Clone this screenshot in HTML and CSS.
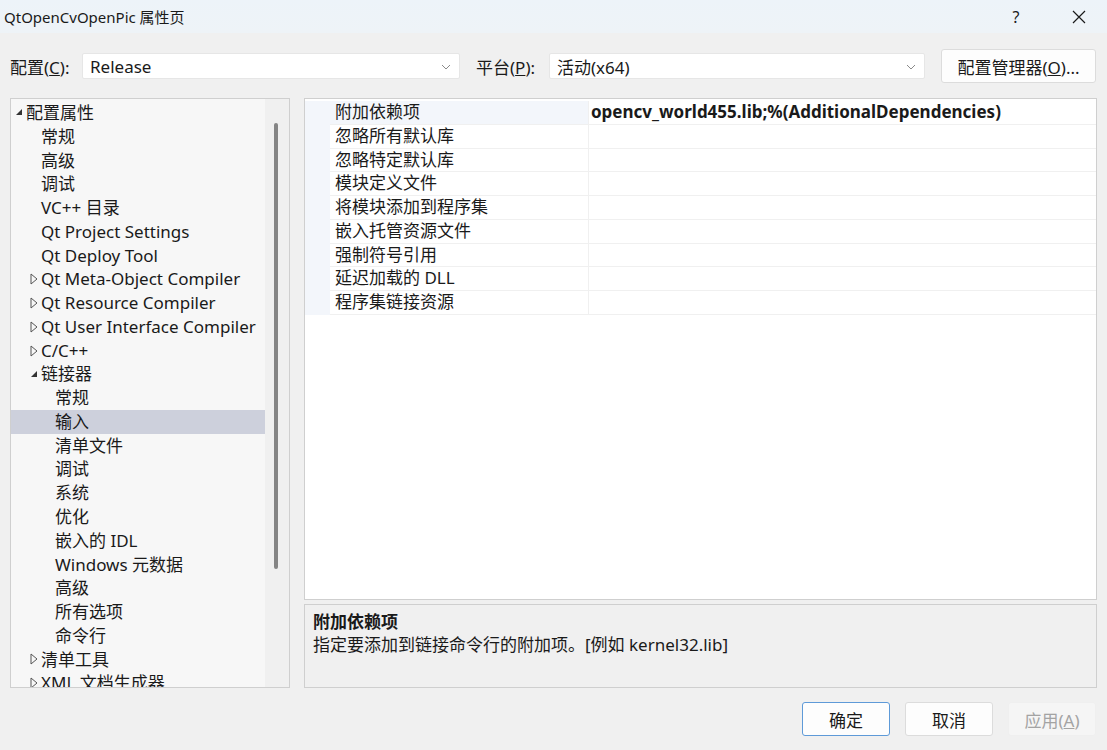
FILE: index.html
```html
<!DOCTYPE html>
<html lang="zh-CN">
<head>
<meta charset="utf-8">
<title>QtOpenCvOpenPic 属性页</title>
<link rel="stylesheet" href="styles.css">
</head>
<body>
<div class="window">
  <div class="titlebar">
    <span class="title">QtOpenCvOpenPic 属性页</span>
    <span class="tb-help">?</span>
    <span class="tb-close">
      <svg width="14" height="14" viewBox="0 0 14 14"><path d="M1 1L13 13M13 1L1 13" stroke="#1a1a1a" stroke-width="1.2" fill="none"/></svg>
    </span>
  </div>

  <div class="config-row">
    <span class="lbl lbl-config">配置(<u>C</u>):</span>
    <div class="combo combo-config"><span>Release</span>
      <svg class="chev" width="10" height="6" viewBox="0 0 10 6"><path d="M1 1L5 5L9 1" stroke="#8a8a8a" stroke-width="1" fill="none"/></svg>
    </div>
    <span class="lbl lbl-plat">平台(<u>P</u>):</span>
    <div class="combo combo-plat"><span>活动(x64)</span>
      <svg class="chev" width="10" height="6" viewBox="0 0 10 6"><path d="M1 1L5 5L9 1" stroke="#8a8a8a" stroke-width="1" fill="none"/></svg>
    </div>
    <button class="btn btn-mgr">配置管理器(<u>O</u>)...</button>
  </div>

  <div class="panes">
    <div class="tree">
      <div class="tree-list">
        <div class="node l0"><span class="tw exp"><svg width="8" height="8" viewBox="0 0 8 8"><path d="M7 1L7 7L1 7Z" fill="#333"/></svg></span>配置属性</div>
        <div class="node l1">常规</div>
        <div class="node l1">高级</div>
        <div class="node l1">调试</div>
        <div class="node l1">VC++ 目录</div>
        <div class="node l1">Qt Project Settings</div>
        <div class="node l1">Qt Deploy Tool</div>
        <div class="node l1c"><span class="tw col"><svg width="8" height="12" viewBox="0 0 8 12"><path d="M1 1L7 6L1 11Z" stroke="#555" stroke-width="1" fill="none"/></svg></span>Qt Meta-Object Compiler</div>
        <div class="node l1c"><span class="tw col"><svg width="8" height="12" viewBox="0 0 8 12"><path d="M1 1L7 6L1 11Z" stroke="#555" stroke-width="1" fill="none"/></svg></span>Qt Resource Compiler</div>
        <div class="node l1c"><span class="tw col"><svg width="8" height="12" viewBox="0 0 8 12"><path d="M1 1L7 6L1 11Z" stroke="#555" stroke-width="1" fill="none"/></svg></span>Qt User Interface Compiler</div>
        <div class="node l1c"><span class="tw col"><svg width="8" height="12" viewBox="0 0 8 12"><path d="M1 1L7 6L1 11Z" stroke="#555" stroke-width="1" fill="none"/></svg></span>C/C++</div>
        <div class="node l1c"><span class="tw exp"><svg width="8" height="8" viewBox="0 0 8 8"><path d="M7 1L7 7L1 7Z" fill="#333"/></svg></span>链接器</div>
        <div class="node l2">常规</div>
        <div class="node l2 sel">输入</div>
        <div class="node l2">清单文件</div>
        <div class="node l2">调试</div>
        <div class="node l2">系统</div>
        <div class="node l2">优化</div>
        <div class="node l2">嵌入的 IDL</div>
        <div class="node l2">Windows 元数据</div>
        <div class="node l2">高级</div>
        <div class="node l2">所有选项</div>
        <div class="node l2">命令行</div>
        <div class="node l1c"><span class="tw col"><svg width="8" height="12" viewBox="0 0 8 12"><path d="M1 1L7 6L1 11Z" stroke="#555" stroke-width="1" fill="none"/></svg></span>清单工具</div>
        <div class="node l1c"><span class="tw col"><svg width="8" height="12" viewBox="0 0 8 12"><path d="M1 1L7 6L1 11Z" stroke="#555" stroke-width="1" fill="none"/></svg></span>XML 文档生成器</div>
      </div>
      <div class="vscroll">
        <div class="thumb"></div>
      </div>
    </div>

    <div class="right">
      <div class="grid">
        <div class="row first"><span class="margin"></span><span class="name">附加依赖项</span><span class="value bold">opencv_world455.lib;%(AdditionalDependencies)</span></div>
        <div class="row"><span class="margin"></span><span class="name">忽略所有默认库</span><span class="value"></span></div>
        <div class="row"><span class="margin"></span><span class="name">忽略特定默认库</span><span class="value"></span></div>
        <div class="row"><span class="margin"></span><span class="name">模块定义文件</span><span class="value"></span></div>
        <div class="row"><span class="margin"></span><span class="name">将模块添加到程序集</span><span class="value"></span></div>
        <div class="row"><span class="margin"></span><span class="name">嵌入托管资源文件</span><span class="value"></span></div>
        <div class="row"><span class="margin"></span><span class="name">强制符号引用</span><span class="value"></span></div>
        <div class="row"><span class="margin"></span><span class="name">延迟加载的 DLL</span><span class="value"></span></div>
        <div class="row"><span class="margin"></span><span class="name">程序集链接资源</span><span class="value"></span></div>
      </div>
      <div class="desc">
        <div class="desc-title">附加依赖项</div>
        <div class="desc-text">指定要添加到链接命令行的附加项。[例如 kernel32.lib]</div>
      </div>
    </div>
  </div>

  <div class="footer">
    <button class="btn btn-ok">确定</button>
    <button class="btn btn-cancel">取消</button>
    <button class="btn btn-apply">应用(<u>A</u>)</button>
  </div>
</div>
</body>
</html>
```

FILE: styles.css
```css
* { box-sizing: border-box; }
html, body { margin: 0; padding: 0; }
body {
  width: 1107px;
  height: 750px;
  overflow: hidden;
  background: #f0f0f0;
  font-family: "Noto Sans", "Noto Sans CJK SC", sans-serif;
  color: #1a1a1a;
  font-size: 17px;
}
.window { display: flex; flex-direction: column; height: 750px; }

.titlebar {
  height: 33px;
  display: flex;
  align-items: center;
  background: linear-gradient(#edf3f9, #eef3f7);
  padding-left: 4px;
  flex-shrink: 0;
}
.title { font-size: 15px; flex: 1; color: #1a1a1a; }
.tb-help { font-size: 16px; width: 16px; margin-right: 48px; text-align: center; }
.tb-close { width: 16px; margin-right: 19px; display: flex; align-items: center; }

.config-row {
  display: flex;
  align-items: center;
  height: 34px;
  margin-top: 16px;
  padding-left: 10px;
}
.lbl { font-size: 17px; white-space: nowrap; }
.lbl-config { width: 72px; }
.lbl-plat { width: 73px; margin-left: 16px; }
.combo {
  height: 26px;
  background: #fff;
  border: 1px solid #e6e6e6;
  border-radius: 2px;
  display: flex;
  align-items: center;
  padding-left: 7px;
  padding-right: 8px;
  font-size: 17px;
}
.combo span { flex: 1; }
.combo-config { width: 378px; }
.combo-plat { width: 376px; }
.chev { display: block; margin-top: 1px; }

.btn {
  font-family: inherit;
  font-size: 17px;
  color: #1a1a1a;
  background: #fdfdfd;
  border: 1px solid #dcdcdc;
  border-radius: 3px;
  padding: 0;
  cursor: default;
}
.btn u { text-decoration: underline; }
.btn-mgr { width: 155px; height: 34px; margin-left: 16px; }

.panes {
  display: flex;
  margin-top: 15px;
  height: 590px;
  padding-left: 10px;
  gap: 14px;
}

.tree {
  width: 280px;
  border: 1px solid #cfcfcf;
  background: #f7f7f7;
  display: flex;
  overflow: hidden;
}
.tree-list { flex: 1; padding-top: 2px; overflow: hidden; }
.node {
  height: 23.78px;
  line-height: 23.78px;
  white-space: nowrap;
  font-size: 17px;
  display: flex;
  align-items: center;
}
.node.l0 { padding-left: 2px; }
.node.l1 { padding-left: 30px; }
.node.l1c { padding-left: 17px; }
.node.l2 { padding-left: 44px; }
.node.sel { background: #cdd0dc; }
.tw { display: inline-flex; align-items: center; justify-content: center; width: 12px; margin-right: 1px; }
.tw.exp svg { margin-top: -1px; }

.vscroll {
  width: 24px;
  background: #f0f0f0;
  position: relative;
}
.thumb {
  position: absolute;
  left: 9px;
  top: 24px;
  width: 4px;
  height: 446px;
  background: #858585;
  border-radius: 2px;
}

.right {
  width: 793px;
  display: flex;
  flex-direction: column;
  gap: 4px;
}
.grid {
  height: 502px;
  background: #fff;
  border: 1px solid #cfcfcf;
  padding-top: 2px;
}
.row {
  display: flex;
  height: 23.75px;
  line-height: 22.75px;
  font-size: 17px;
}
.margin { width: 25px; background: #f3f6fb; flex-shrink: 0; }
.name {
  width: 258px;
  padding-left: 5px;
  border-bottom: 1px solid #f0f0f0;
  flex-shrink: 0;
  white-space: nowrap;
}
.row.first .name { background: #f3f6fb; }
.value {
  flex: 1;
  padding-left: 2px;
  border-left: 1px solid #f0f0f0;
  border-bottom: 1px solid #f0f0f0;
  white-space: nowrap;
}
.value.bold { font-weight: 700; }

.desc {
  flex: 1;
  border: 1px solid #cfcfcf;
  background: #f0f0f0;
  padding: 6px 8px;
}
.desc-title { font-weight: 700; font-size: 17px; line-height: 22px; }
.desc-text { font-size: 17px; line-height: 24px; }

.footer {
  display: flex;
  justify-content: flex-end;
  gap: 15px;
  margin-top: 14px;
  padding-right: 11px;
}
.footer .btn { width: 88px; height: 34px; }
.btn-ok { border: 1px solid #5e9ad8; background: #fdfdfd; }
.btn-apply { background: #f5f5f5; border-color: #efefef; color: #a3a3a3; }
.btn-apply u { text-decoration: underline; }
```
